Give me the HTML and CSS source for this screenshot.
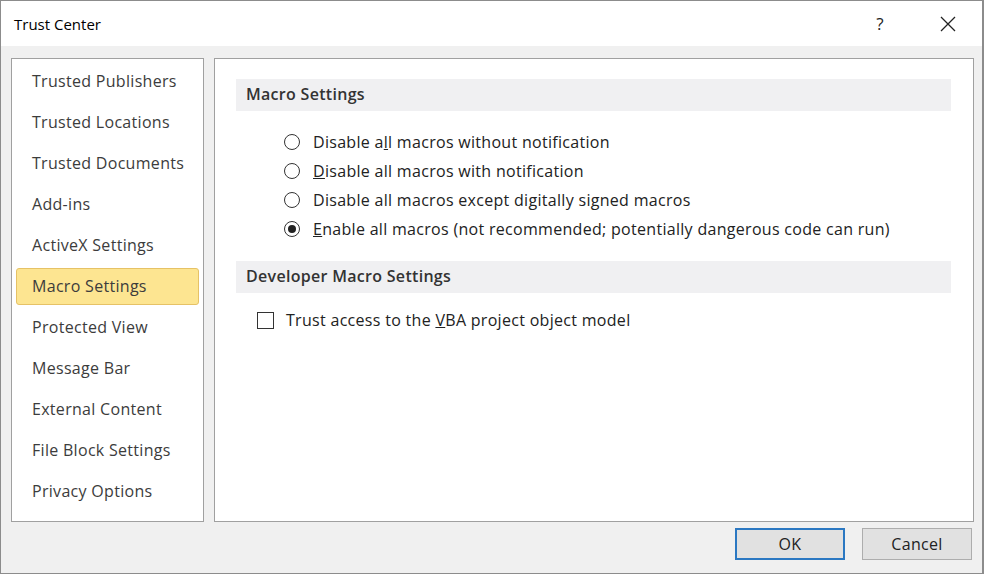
FILE: index.html
```html
<!DOCTYPE html>
<html lang="en">
<head>
    <meta charset="UTF-8">
    <meta name="viewport" content="width=device-width, initial-scale=1.0">
    <title>Trust Center</title>
    <link rel="stylesheet" href="styles.css">
</head>
<body>
    <div class="window">
        <div class="title-bar">
            <span class="title">Trust Center</span>
            <div class="title-buttons">
                <span class="help">?</span>
                <svg class="close" width="16" height="16" viewBox="0 0 16 16">
                    <path d="M1 1L15 15M15 1L1 15" stroke="#222" stroke-width="1.3" fill="none"/>
                </svg>
            </div>
        </div>
        <div class="body">
            <div class="panes">
                <ul class="nav">
                    <li>Trusted Publishers</li>
                    <li>Trusted Locations</li>
                    <li>Trusted Documents</li>
                    <li>Add-ins</li>
                    <li>ActiveX Settings</li>
                    <li class="selected">Macro Settings</li>
                    <li>Protected View</li>
                    <li>Message Bar</li>
                    <li>External Content</li>
                    <li>File Block Settings</li>
                    <li>Privacy Options</li>
                </ul>
                <div class="content">
                    <div class="section-header">Macro Settings</div>
                    <div class="radios">
                        <label class="radio"><span class="dot"></span><span>Disable a<u>l</u>l macros without notification</span></label>
                        <label class="radio"><span class="dot"></span><span><u>D</u>isable all macros with notification</span></label>
                        <label class="radio"><span class="dot"></span><span>Disable all macros except di<u>g</u>itally signed macros</span></label>
                        <label class="radio checked"><span class="dot"></span><span><u>E</u>nable all macros (not recommended; potentially dangerous code can run)</span></label>
                    </div>
                    <div class="section-header">Developer Macro Settings</div>
                    <label class="check"><span class="box"></span><span>Trust access to the <u>V</u>BA project object model</span></label>
                </div>
            </div>
            <div class="footer">
                <button class="btn default">OK</button>
                <button class="btn">Cancel</button>
            </div>
        </div>
    </div>
</body>
</html>
```

FILE: styles.css
```css
body{
    margin: 0;
    font-family: "Open Sans", "Noto Sans", sans-serif;
    font-size: 16px;
    letter-spacing: 0.3px;
    color: #1e1e1e;
}
.window{
    width: 984px;
    height: 574px;
    box-sizing: border-box;
    border: 1px solid #8c8c8c;
    border-right-width: 2px;
    display: flex;
    flex-direction: column;
    background: #f0f0f0;
}
.title-bar{
    height: 45px;
    background: #fff;
    display: flex;
    align-items: center;
    justify-content: space-between;
    padding-left: 13px;
}
.title{
    font-size: 15px;
    letter-spacing: 0;
    color: #000;
}
.title-buttons{
    display: flex;
    align-items: center;
    gap: 56px;
    padding-right: 26px;
}
.help{
    font-size: 17px;
    color: #222;
}
.body{
    flex: 1;
    display: flex;
    flex-direction: column;
    padding: 12px 8px 0 10px;
}
.panes{
    display: flex;
    gap: 10px;
    height: 464px;
}
.nav{
    list-style: none;
    margin: 0;
    padding: 4px 4px;
    width: 193px;
    box-sizing: border-box;
    background: #fff;
    border: 1px solid #a0a0a0;
    display: flex;
    flex-direction: column;
    gap: 4px;
}
.nav li{
    height: 37px;
    line-height: 35px;
    padding-left: 15px;
    border: 1px solid transparent;
    border-radius: 3px;
    box-sizing: border-box;
    color: #3c3c3c;
}
.nav li.selected{
    background: #fde591;
    border-color: #e6c266;
}
.content{
    flex: 1;
    background: #fff;
    border: 1px solid #a0a0a0;
    padding: 20px 22px 0 21px;
}
.section-header{
    height: 32px;
    line-height: 31px;
    background: #f0f0f2;
    padding-left: 10px;
    font-weight: 600;
    color: #333;
}
.radios{
    display: flex;
    flex-direction: column;
    padding: 16px 0 18px 48px;
}
.radio{
    display: flex;
    align-items: center;
    height: 29px;
    color: #222;
}
.dot{
    width: 16px;
    height: 16px;
    box-sizing: border-box;
    border: 1px solid #333;
    border-radius: 50%;
    margin-right: 13px;
    display: flex;
    align-items: center;
    justify-content: center;
}
.radio.checked .dot::after{
    content: "";
    width: 8px;
    height: 8px;
    border-radius: 50%;
    background: #222;
}
.check{
    display: flex;
    align-items: center;
    margin: 16px 0 0 21px;
    color: #222;
}
.box{
    width: 17px;
    height: 17px;
    box-sizing: border-box;
    border: 1px solid #333;
    margin-right: 12px;
}
.footer{
    display: flex;
    justify-content: flex-end;
    gap: 17px;
    padding: 6px 2px 0 0;
}
.btn{
    width: 110px;
    height: 32px;
    font-family: inherit;
    font-size: 16px;
    letter-spacing: 0.3px;
    background: #e1e1e1;
    border: 1px solid #adadad;
    color: #222;
}
.btn.default{
    border: 2px solid #2b78c2;
}
```
